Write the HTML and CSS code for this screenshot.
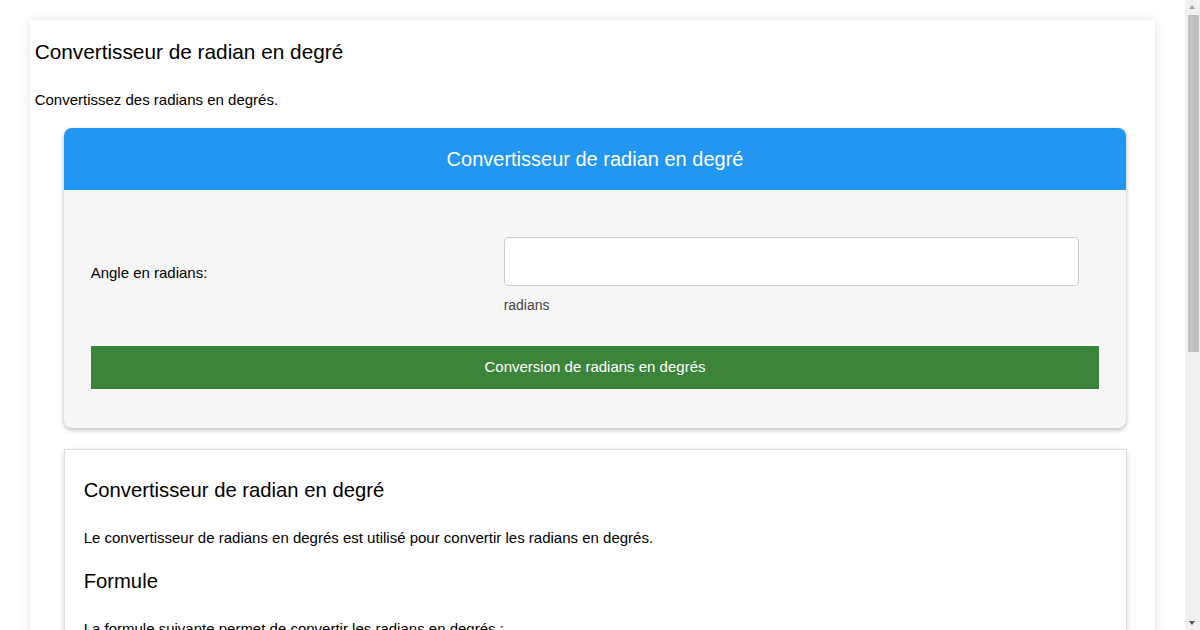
FILE: index.html
```html
<!DOCTYPE html>
<html lang="fr">
<head>
<meta charset="utf-8">
<title>Convertisseur de radian en degré</title>
<link rel="stylesheet" href="styles.css">
</head>
<body>
<div class="page">
  <h1 class="page-title">Convertisseur de radian en degré</h1>
  <p class="page-intro">Convertissez des radians en degrés.</p>

  <div class="card">
    <div class="card-header">Convertisseur de radian en degré</div>
    <div class="card-body">
      <div class="form-row">
        <label class="form-label" for="rad">Angle en radians:</label>
        <div class="form-field">
          <input class="form-input" id="rad" type="text">
          <div class="form-unit">radians</div>
        </div>
      </div>
      <button class="convert-btn" type="button">Conversion de radians en degrés</button>
    </div>
  </div>

  <div class="info">
    <h2 class="info-title">Convertisseur de radian en degré</h2>
    <p class="info-text">Le convertisseur de radians en degrés est utilisé pour convertir les radians en degrés.</p>
    <h2 class="info-title">Formule</h2>
    <p class="info-text">La formule suivante permet de convertir les radians en degrés :</p>
    <p class="info-text">degrés = radians × 180 / π</p>
    <h2 class="info-title">Exemple</h2>
    <p class="info-text">Convertir 2 radians en degrés :</p>
    <p class="info-text">degrés = 2 × 180 / π = 114,5916°</p>
    <p class="info-text">Un radian est égal à environ 57,2958 degrés.</p>
  </div>
</div>

<div class="scrollbar" aria-hidden="true">
  <span class="scroll-arrow scroll-up"></span>
  <span class="scroll-thumb"></span>
  <span class="scroll-arrow scroll-down"></span>
</div>
</body>
</html>
```

FILE: styles.css
```css
html, body {
  margin: 0;
  padding: 0;
  background: #ffffff;
}

body {
  font-family: "Liberation Sans", Arial, sans-serif;
  color: #000;
  padding-right: 15px;
}

.page {
  width: 95%;
  margin: 20px auto 20px;
  padding: 5px 5px 30px;
  box-sizing: border-box;
  background: #fff;
  box-shadow: 0 0 10px rgba(0, 0, 0, 0.12);
}

.page-title {
  font-size: 20.8px;
  font-weight: normal;
  line-height: 24px;
  margin: 15px 0 27px;
}

.page-intro {
  font-size: 15px;
  line-height: 17px;
  margin: 0 0 20px;
}

.card {
  margin: 0 24px 0 29px;
  border-radius: 8px;
  background: #f7f7f7;
  box-shadow: 0 2px 5px rgba(0, 0, 0, 0.28);
  overflow: hidden;
}

.card-header {
  background: #2196f3;
  color: #fff;
  text-align: center;
  font-size: 20px;
  line-height: 23px;
  padding: 20px 0 19px;
}

.card-body {
  padding: 47px 27px 39px;
}

.form-row {
  display: grid;
  grid-template-columns: 413px 1fr;
  align-items: start;
}

.form-label {
  font-size: 15px;
  line-height: 17px;
  margin-top: 27px;
}

.form-field {
  padding-right: 20px;
}

.form-input {
  display: block;
  width: 100%;
  height: 49px;
  box-sizing: border-box;
  border: 1px solid #cccccc;
  border-radius: 4px;
  background: #fff;
  font-family: inherit;
  font-size: 15px;
  padding: 0 10px;
  margin: 0;
}

.form-unit {
  font-size: 14px;
  line-height: 16px;
  color: #444;
  margin-top: 11px;
}

.convert-btn {
  display: block;
  width: 100%;
  height: 43px;
  margin-top: 33px;
  border: none;
  background: #3b843a;
  color: #fff;
  font-family: inherit;
  font-size: 15px;
  padding: 0 0 2px;
}

.info {
  margin: 21px 23px 0 29px;
  border: 1px solid #dddddd;
  box-shadow: 0 2px 5px rgba(0, 0, 0, 0.18);
  background: #fff;
  padding: 29px 19px 20px;
}

.info-title {
  font-size: 20.25px;
  font-weight: normal;
  line-height: 23px;
  margin: 0 0 27px;
}

.info-text {
  font-size: 15px;
  line-height: 17px;
  margin: 0 0 24px;
}

/* imitation of the browser's classic scrollbar */
.scrollbar {
  position: fixed;
  top: 0;
  right: 0;
  width: 15px;
  height: 100vh;
  background: #f1f1f1;
  display: flex;
  flex-direction: column;
  align-items: center;
}

.scroll-arrow {
  flex: 0 0 15px;
  width: 15px;
  position: relative;
}

.scroll-arrow::after {
  content: "";
  position: absolute;
  left: 4px;
  width: 0;
  height: 0;
  border-left: 3.5px solid transparent;
  border-right: 3.5px solid transparent;
}

.scroll-up::after {
  top: 5px;
  border-bottom: 4px solid #a3a3a3;
}

.scroll-down::after {
  bottom: 5px;
  border-top: 4px solid #505050;
}

.scroll-thumb {
  flex: 0 0 337px;
  width: 11px;
  margin-left: 1px;
  background: #c1c1c1;
}

.scroll-thumb + .scroll-arrow {
  margin-top: auto;
}
```
